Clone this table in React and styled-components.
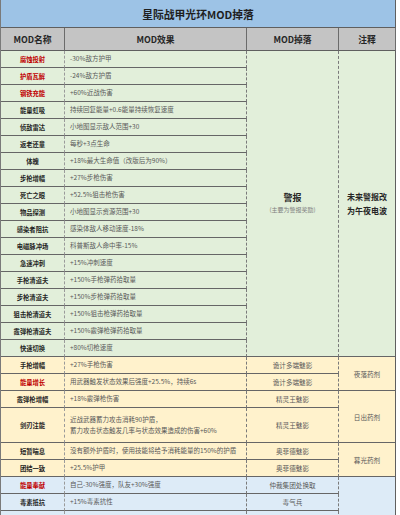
import React from 'react';
import styled, { createGlobalStyle } from 'styled-components';

const GlobalStyle = createGlobalStyle`
  html, body {
    margin: 0;
    padding: 0;
    background: #ffffff;
    overflow: hidden;
  }
  body {
    font-family: "Noto Sans CJK SC", "Noto Sans", sans-serif;
  }
`;

const GREEN = '#e2efda';
const YELLOW = '#fff2cc';
const BLUE = '#ddebf7';

const Sheet = styled.div`
  width: 396px;
  box-sizing: border-box;
  border-left: 1px solid #7a7a7a;
`;

const Title = styled.div`
  height: 28px;
  box-sizing: border-box;
  background: #9dc3e6;
  border-bottom: 1px solid #5f5f5f;
  border-right: 1px solid #5f5f5f;
  display: flex;
  align-items: center;
  justify-content: center;
  font-size: 10.8px;
  font-weight: 700;
  color: #1f1f1f;
`;

const Grid = styled.div`
  display: grid;
  grid-template-columns: 64px 182px 92px 57px;
`;

const HeadCell = styled.div`
  height: 23px;
  box-sizing: border-box;
  background: #c4c4c4;
  border-right: 1px solid #6b6b6b;
  border-bottom: 1px solid #5f5f5f;
  display: flex;
  align-items: center;
  justify-content: center;
  font-size: 8.8px;
  font-weight: 700;
  color: #262626;
`;

const Cell = styled.div`
  box-sizing: border-box;
  min-height: ${(p) => (p.$tall ? 35 : 17)}px;
  grid-row: span ${(p) => p.$span || 1};
  background: ${(p) => p.$bg};
  border-bottom: 1px solid #666666;
  display: flex;
  flex-direction: column;
  justify-content: center;
  align-items: center;
  color: #595959;
  font-size: 6.5px;
  white-space: nowrap;
`;

const NameCell = styled(Cell)`
  border-right: 1px dashed #9a9a9a;
  font-size: 6.3px;
  font-weight: 700;
  color: ${(p) => (p.$red ? '#c00000' : '#1f1f1f')};
`;

const EffectCell = styled(Cell)`
  align-items: flex-start;
  padding-left: 5px;
  line-height: 11.4px;
  border-right: 1px dashed #7a7a7a;
`;

const DropCell = styled(Cell)`
  border-right: 1px dashed #7a7a7a;
  font-size: 6.6px;
`;

const NoteCell = styled(Cell)`
  border-right: 1px solid #5f5f5f;
  font-size: 6.6px;
`;

const Alarm = styled.div`
  font-size: 9px;
  font-weight: 700;
  color: #262626;
  line-height: 12px;
`;

const AlarmSub = styled.div`
  font-size: 6px;
  color: #7f7f7f;
  line-height: 12px;
`;

const Remark = styled.div`
  font-size: 8px;
  font-weight: 700;
  color: #262626;
  line-height: 13.4px;
  text-align: center;
`;

const sections = [
  {
    bg: GREEN,
    rows: [
      { name: '腐蚀投射', red: true, effect: '-30%敌方护甲', drop: { alarm: true, span: 18 }, note: { remark: true, span: 18 } },
      { name: '护盾瓦解', red: true, effect: '-24%敌方护盾' },
      { name: '钢铁充能', red: true, effect: '+60%近战伤害' },
      { name: '能量虹吸', effect: '持续回复能量+0.6能量持续恢复速度' },
      { name: '侦敌雷达', effect: '小地图显示敌人范围+30' },
      { name: '返老还童', effect: '每秒+3点生命' },
      { name: '体魄', effect: '+18%最大生命值（改版后为90%）' },
      { name: '步枪增幅', effect: '+27%步枪伤害' },
      { name: '死亡之眼', effect: '+52.5%狙击枪伤害' },
      { name: '物品探测', effect: '小地图显示资源范围+30' },
      { name: '感染者阻抗', effect: '感染体敌人移动速度-18%' },
      { name: '电磁脉冲场', effect: '科普斯敌人命中率-15%' },
      { name: '急速冲刺', effect: '+15%冲刺速度' },
      { name: '手枪清道夫', effect: '+150%手枪弹药拾取量' },
      { name: '步枪清道夫', effect: '+150%步枪弹药拾取量' },
      { name: '狙击枪清道夫', effect: '+150%狙击枪弹药拾取量' },
      { name: '霰弹枪清道夫', effect: '+150%霰弹枪弹药拾取量' },
      { name: '快速切换', effect: '+80%切枪速度' },
    ],
  },
  {
    bg: YELLOW,
    rows: [
      { name: '手枪增幅', effect: '+27%手枪伤害', drop: { text: '诡计多端魅影' }, note: { text: '夜落药剂', span: 2 } },
      { name: '能量增长', red: true, effect: '用武器触发状态效果后强度+25.5%，持续6s', drop: { text: '诡计多端魅影' } },
      { name: '霰弹枪增幅', effect: '+18%霰弹枪伤害', drop: { text: '精灵王魅影' }, note: { text: '日出药剂', span: 2 } },
      {
        name: '剑刃注能',
        tall: true,
        effect: ['近战武器蓄力攻击消耗90护盾，', '蓄力攻击状态触发几率与状态效果造成的伤害+60%'],
        drop: { text: '精灵王魅影' },
      },
      { name: '短暂喘息', effect: '没有额外护盾时，使用技能将给予消耗能量的150%的护盾', drop: { text: '奥菲德魅影' }, note: { text: '暮光药剂', span: 2 } },
      { name: '团结一致', effect: '+25.5%护甲', drop: { text: '奥菲德魅影' } },
    ],
  },
  {
    bg: BLUE,
    rows: [
      { name: '能量奉献', red: true, effect: '自己-30%强度，队友+30%强度', drop: { text: '仲裁集团处换取' }, note: { text: '', span: 3 } },
      { name: '毒素抵抗', effect: '+15%毒素抗性', drop: { text: '毒气兵' } },
      { name: '', effect: '', drop: { text: '' } },
    ],
  },
];

function renderDrop(drop, bg, tall) {
  if (drop.alarm) {
    return (
      <DropCell $bg={bg} $span={drop.span}>
        <Alarm>警报</Alarm>
        <AlarmSub>(主要为警报奖励)</AlarmSub>
      </DropCell>
    );
  }
  return (
    <DropCell $bg={bg} $span={drop.span} $tall={tall}>
      {drop.text}
    </DropCell>
  );
}

function renderNote(note, bg) {
  if (note.remark) {
    return (
      <NoteCell $bg={bg} $span={note.span}>
        <Remark>
          未来警报改
          <br />
          为午夜电波
        </Remark>
      </NoteCell>
    );
  }
  return (
    <NoteCell $bg={bg} $span={note.span}>
      {note.text}
    </NoteCell>
  );
}

export default function App() {
  return (
    <>
      <GlobalStyle />
      <Sheet>
        <Title>星际战甲光环MOD掉落</Title>
        <Grid>
          <HeadCell>MOD名称</HeadCell>
          <HeadCell>MOD效果</HeadCell>
          <HeadCell>MOD掉落</HeadCell>
          <HeadCell>注释</HeadCell>
          {sections.map((sec) =>
            sec.rows.map((row, i) => (
              <React.Fragment key={sec.bg + i}>
                <NameCell $bg={sec.bg} $red={row.red} $tall={row.tall}>
                  {row.name}
                </NameCell>
                <EffectCell $bg={sec.bg} $tall={row.tall}>
                  {Array.isArray(row.effect)
                    ? row.effect.map((line) => <span key={line}>{line}</span>)
                    : row.effect}
                </EffectCell>
                {row.drop && renderDrop(row.drop, sec.bg, row.tall)}
                {row.note && renderNote(row.note, sec.bg)}
              </React.Fragment>
            ))
          )}
        </Grid>
      </Sheet>
    </>
  );
}
